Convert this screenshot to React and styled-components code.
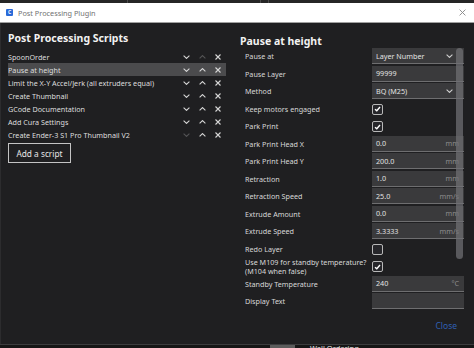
import React from 'react'
import styled, { createGlobalStyle } from 'styled-components'

const Global = createGlobalStyle`
  html, body { margin: 0; padding: 0; background: #1b1b1b; }
  * { box-sizing: border-box; }
`

const scripts = [
  { name: 'SpoonOrder', upOff: true },
  { name: 'Pause at height', active: true },
  { name: 'Limit the X-Y Accel/Jerk (all extruders equal)' },
  { name: 'Create Thumbnail' },
  { name: 'GCode Documentation' },
  { name: 'Add Cura Settings' },
  { name: 'Create Ender-3 S1 Pro Thumbnail V2', downOff: true },
]

const settings = [
  { label: 'Pause at', kind: 'select', value: 'Layer Number' },
  { label: 'Pause Layer', kind: 'text', value: '99999' },
  { label: 'Method', kind: 'select', value: 'BQ (M25)' },
  { label: 'Keep motors engaged', kind: 'check', checked: true },
  { label: 'Park Print', kind: 'check', checked: true },
  { label: 'Park Print Head X', kind: 'text', value: '0.0', unit: 'mm' },
  { label: 'Park Print Head Y', kind: 'text', value: '200.0', unit: 'mm' },
  { label: 'Retraction', kind: 'text', value: '1.0', unit: 'mm' },
  { label: 'Retraction Speed', kind: 'text', value: '25.0', unit: 'mm/s' },
  { label: 'Extrude Amount', kind: 'text', value: '0.0', unit: 'mm' },
  { label: 'Extrude Speed', kind: 'text', value: '3.3333', unit: 'mm/s' },
  { label: 'Redo Layer', kind: 'check', checked: false },
  { label: ['Use M109 for standby temperature?', '(M104 when false)'], kind: 'check', checked: true },
  { label: 'Standby Temperature', kind: 'text', value: '240', unit: '°C' },
  { label: 'Display Text', kind: 'text', value: '' },
]

const Page = styled.div`
  width: 474px;
  height: 348px;
  overflow: hidden;
  display: flex;
  flex-direction: column;
  font-family: 'Noto Sans', 'Open Sans', sans-serif;
  background: #1b1b1b;
`

const TopStrip = styled.div`
  height: 3px;
  display: flex;
  background: #262626;
`

const StripCell = styled.div`
  width: ${p => p.w}px;
  border-right: 1px solid #4a4a4a;
`

const TitleBar = styled.div`
  height: 20px;
  background: #ffffff;
  border-bottom: 1px solid #a0a0a0;
  display: flex;
  align-items: center;
  padding: 0 8px 0 6px;
  gap: 5px;
`

const AppIcon = styled.div`
  width: 7px;
  height: 7px;
  border-radius: 1px;
  background: #2a6ad8;
  color: #fff;
  font-size: 5px;
  font-weight: bold;
  line-height: 7px;
  text-align: center;
`

const TitleText = styled.div`
  flex: 1;
  font-size: 7.3px;
  color: #727272;
`

const Body = styled.div`
  height: 321px;
  background: #1f1f21;
  border-left: 1px solid #2c2c2e;
  display: flex;
`

const LeftPanel = styled.div`
  width: 231px;
  padding: 8px 6px 0 7px;
`

const Heading = styled.div`
  font-size: 10.5px;
  font-weight: bold;
  color: #f2f2f2;
  line-height: ${p => p.lh || 14}px;
  margin-bottom: ${p => p.mb || 0}px;
`

const ScriptRow = styled.div`
  height: 13px;
  display: flex;
  align-items: center;
  background: ${p => (p.active ? '#4b4b4d' : 'transparent')};
  font-size: 7.2px;
  color: #dedede;
`

const ScriptName = styled.div`
  flex: 1;
  white-space: nowrap;
`

const IconCell = styled.div`
  width: 16px;
  height: 13px;
  display: flex;
  align-items: center;
  justify-content: center;
  color: ${p => (p.off ? '#545456' : '#d6d6d6')};
`

const AddButton = styled.div`
  margin-top: 2px;
  width: 63px;
  height: 20px;
  border: 1px solid #c4c4c4;
  color: #e6e6e6;
  font-size: 8.3px;
  display: flex;
  align-items: center;
  justify-content: center;
`

const RightPanel = styled.div`
  position: relative;
  flex: 1;
  padding: 12px 10px 0 8px;
  display: flex;
  flex-direction: column;
`

const SettingsGrid = styled.div`
  display: grid;
  grid-template-columns: 132px 92px;
  grid-auto-rows: 17.5px;
`

const Label = styled.div`
  padding-left: 5px;
  font-size: 7.2px;
  color: #d8d8d8;
  display: flex;
  flex-direction: column;
  justify-content: center;
  line-height: 9px;
  white-space: nowrap;
`

const Field = styled.div`
  height: 16px;
  background: #3a3a3c;
  border-bottom: 1px solid #6e6e70;
  display: flex;
  align-items: center;
  padding: 0 4px;
  font-size: 7.2px;
  color: #e2e2e2;
`

const FieldValue = styled.div`
  flex: 1;
`

const Unit = styled.div`
  color: #8c8c8c;
  padding-right: 1px;
`

const Caret = styled.div`
  margin-right: 7px;
  display: flex;
  color: #d0d0d0;
`

const CheckCell = styled.div`
  display: flex;
  align-items: center;
`

const Box = styled.div`
  width: 11px;
  height: 11px;
  border: 1px solid #b8b8b8;
  border-radius: 2px;
  background: #26262a;
  display: flex;
  align-items: center;
  justify-content: center;
`

const Scrollbar = styled.div`
  position: absolute;
  top: 25px;
  left: 224px;
  width: 7px;
  height: 211px;
  border-radius: 3.5px;
  background: rgba(112, 112, 116, 0.72);
`

const Footer = styled.div`
  margin-top: 9.5px;
  display: flex;
  justify-content: flex-end;
  padding-right: 7px;
`

const CloseLink = styled.div`
  font-size: 8.5px;
  line-height: 12px;
  color: #2f5fb3;
`

const BottomStrip = styled.div`
  height: 4px;
  border-top: 1px solid #3c3c3e;
  background: #161616;
  display: flex;
  padding-left: 270px;
  gap: 15px;
  overflow: hidden;
`

const GreyBlock = styled.div`
  width: 25px;
  height: 3px;
  background: #5c5c5c;
`

const StripText = styled.div`
  font-size: 7.5px;
  line-height: 8px;
  margin-top: -1px;
  color: #e8e8e8;
`

const ChevronDown = () => (
  <svg width="7" height="4" viewBox="0 0 7 4">
    <polyline points="0.6,0.6 3.5,3.4 6.4,0.6" fill="none" stroke="currentColor" strokeWidth="1.1" />
  </svg>
)

const ChevronUp = () => (
  <svg width="7" height="4" viewBox="0 0 7 4">
    <polyline points="0.6,3.4 3.5,0.6 6.4,3.4" fill="none" stroke="currentColor" strokeWidth="1.1" />
  </svg>
)

const Cross = ({ size = 6, color = 'currentColor', w = 1.1 }) => (
  <svg width={size} height={size} viewBox="0 0 6 6">
    <path d="M0.5 0.5 L5.5 5.5 M5.5 0.5 L0.5 5.5" stroke={color} strokeWidth={w} />
  </svg>
)

const Tick = () => (
  <svg width="7" height="6" viewBox="0 0 7 6">
    <polyline points="1,3.2 2.8,4.8 6,1" fill="none" stroke="#ffffff" strokeWidth="1.4" />
  </svg>
)

const Setting = ({ s }) => {
  let control
  if (s.kind === 'check') {
    control = (
      <CheckCell>
        <Box>{s.checked && <Tick />}</Box>
      </CheckCell>
    )
  } else {
    control = (
      <Field>
        <FieldValue>{s.value}</FieldValue>
        {s.unit && <Unit>{s.unit}</Unit>}
        {s.kind === 'select' && (
          <Caret>
            <ChevronDown />
          </Caret>
        )}
      </Field>
    )
  }
  const lines = Array.isArray(s.label) ? s.label : [s.label]
  return (
    <>
      <Label>
        {lines.map(l => (
          <span key={l}>{l}</span>
        ))}
      </Label>
      {control}
    </>
  )
}

export default function App() {
  return (
    <Page>
      <Global />
      <TopStrip>
        <StripCell w={128} />
        <StripCell w={133} />
        <StripCell w={8} />
      </TopStrip>
      <TitleBar>
        <AppIcon>C</AppIcon>
        <TitleText>Post Processing Plugin</TitleText>
        <Cross size={7} color="#8a8a8a" w={0.8} />
      </TitleBar>
      <Body>
        <LeftPanel>
          <Heading mb={5}>Post Processing Scripts</Heading>
          {scripts.map(s => (
            <ScriptRow key={s.name} active={s.active}>
              <ScriptName>{s.name}</ScriptName>
              <IconCell off={s.downOff}>
                <ChevronDown />
              </IconCell>
              <IconCell off={s.upOff}>
                <ChevronUp />
              </IconCell>
              <IconCell>
                <Cross />
              </IconCell>
            </ScriptRow>
          ))}
          <AddButton>Add a script</AddButton>
        </LeftPanel>
        <RightPanel>
          <Heading lh={13}>Pause at height</Heading>
          <SettingsGrid>
            {settings.map((s, i) => (
              <Setting key={i} s={s} />
            ))}
          </SettingsGrid>
          <Scrollbar />
          <Footer>
            <CloseLink>Close</CloseLink>
          </Footer>
        </RightPanel>
      </Body>
      <BottomStrip>
        <GreyBlock />
        <StripText>Wall Ordering</StripText>
      </BottomStrip>
    </Page>
  )
}
